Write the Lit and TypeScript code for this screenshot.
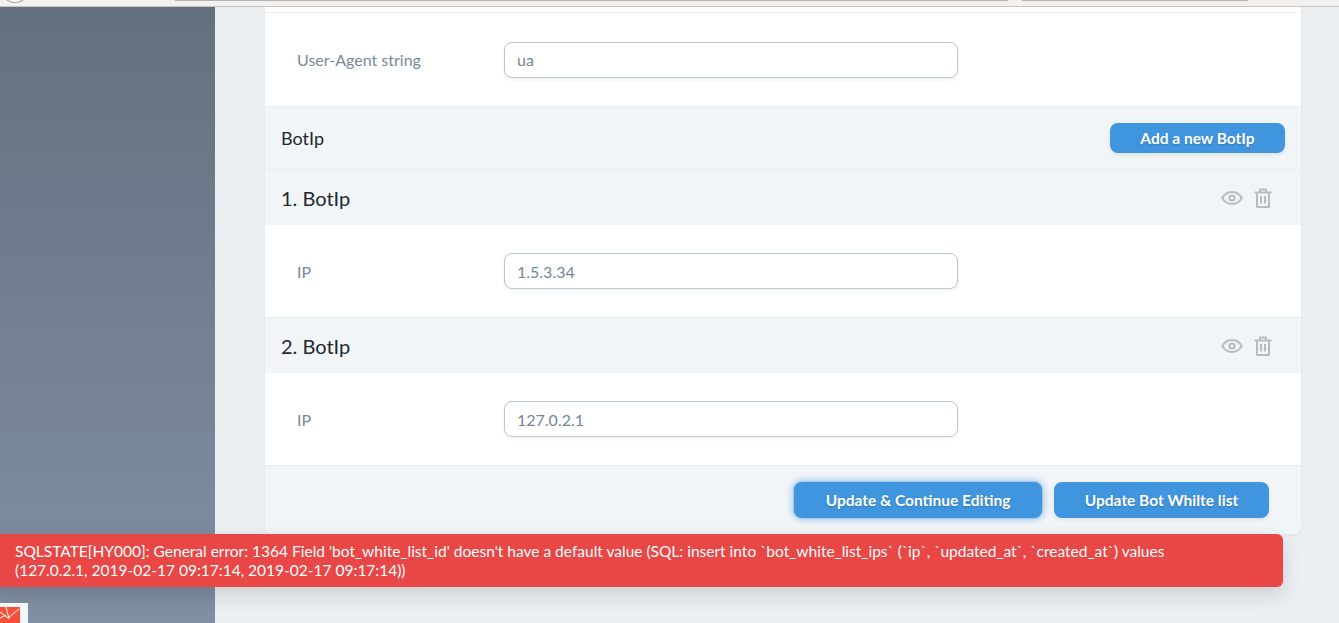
import { LitElement, html, css, svg } from "lit";
import { customElement } from "lit/decorators.js";

const eye = html`<svg class="ic" width="22" height="16" viewBox="0 0 22 16" fill="none" stroke="#b8bcc0" stroke-width="2"><path d="M1.2 8C3.6 4 7 2 11 2s7.4 2 9.8 6c-2.4 4-5.800 6-9.800 6S3.600 12 1.200 8z"/><circle cx="11" cy="8" r="2.600"/></svg>`;
const trash = html`<svg class="ic" width="18" height="20" viewBox="0 0 18 20" fill="none" stroke="#b8bcc0" stroke-width="2"><path d="M.5 4.500h17M3 4.500V18.500a.5.500 0 0 0 .5.500h11a.5.500 0 0 0 .5-.5V4.500M6 4.500V1.500h6v3M7 8v7.500M11 8v7.500"/></svg>`;

@customElement("app-root")
export class AppRoot extends LitElement {
  static styles = css`
    :host {
      display: block;
      width: 1339px;
      height: 623px;
      overflow: hidden;
      position: relative;
      background: #edf0f3;
      font-family: "Lato", "Noto Sans", sans-serif;
      color: #22292f;
    }
    * { box-sizing: border-box; }
    .chrome {
      position: absolute; left: 0; right: 0; top: 0; height: 7px;
      background: #f3f1ef; border-bottom: 1px solid #c9c4c0; overflow: hidden;
    }
    .chrome .tab { position: absolute; top: -6px; height: 7px; background: #f8f7f6; border-bottom: 1px solid #b5b3b0; }
    .chrome .t1 { left: 175px; width: 833px; }
    .chrome .t2 { left: 1022px; width: 226px; }
    .chrome .back { position: absolute; left: 4px; top: -12px; width: 22px; height: 15px; border: 1px solid #a5a3a0; border-radius: 50%; background: #fbfafa; }
    .layout { display: flex; height: 623px; padding-top: 7px; }
    .side { width: 215px; flex: none; background: linear-gradient(180deg, #64707f 0%, #808fa3 100%); position: relative; }
    .main { flex: 1; padding-left: 50px; padding-right: 38px; }
    .card {
      width: 1036px; background: #fff; border-radius: 0 0 8px 8px;
      box-shadow: 0 2px 4px rgba(0,0,0,.05); overflow: hidden;
    }
    .topedge { height: 6px; border-bottom: 1px solid #f0f2f4; }
    .row { display: flex; align-items: center; padding: 24px 32px; height: 92px; }
    .row.first { height: 93px; padding-top: 24px; }
    .label { width: 207px; font-size: 16px; color: #79889b; }
    .input {
      width: 454px; height: 36px; border: 1px solid #b8c5d5; border-radius: 8px;
      background: #fff; padding: 0 12px; display: flex; align-items: center;
      font-size: 16px; color: #77859a; box-shadow: 0 2px 4px rgba(0,0,0,.05);
    }
    .band { background: #f2f5f8; border-top: 1px solid #e9edf1; display: flex; align-items: center; }
    .head { height: 63px; padding: 0 16px; justify-content: space-between; font-size: 18px; }
    .item { height: 56px; padding: 0 16px; justify-content: space-between; font-size: 20px; color: #22292f; }
    .icons { display: flex; align-items: center; gap: 11px; padding-right: 13px; }
    .ic { display: block; }
    .btn {
      height: 36px; border-radius: 8px; background: #3f96de; color: #fff; font-weight: 700;
      font-size: 15.500px; display: flex; align-items: center; justify-content: center;
      text-shadow: 0 1px 2px rgba(0,0,0,.2); box-shadow: 0 2px 4px rgba(0,0,0,.08);
    }
    .add { width: 175px; height: 30px; }
    .foot { height: 69px; padding: 0 32px; justify-content: flex-end; gap: 12px; }
    .upd1 { width: 248px; box-shadow: 0 0 0 1px rgba(63,150,222,.25), 0 0 6px 2px rgba(63,150,222,.45); }
    .upd2 { width: 215px; }
    .toast {
      position: absolute; left: -8px; top: 534px; width: 1291px; height: 53px;
      background: #e94646; border-radius: 6px; color: #fff; font-size: 15.500px; line-height: 19px;
      padding: 8px 23px; box-shadow: 0 8px 20px rgba(0,0,0,.14);
    }
    .toast div { white-space: nowrap; }
    .logo { position: absolute; left: 0; top: 603px; width: 28px; height: 20px; background: #f4f5f7; overflow: hidden; }
  `;

  render() {
    return html`
      <div class="layout">
        <div class="side"></div>
        <div class="main">
          <div class="card">
            <div class="topedge"></div>
            <div class="row first">
              <div class="label">User-Agent string</div>
              <div class="input">ua</div>
            </div>
            <div class="band head"><span>BotIp</span><div class="btn add">Add a new BotIp</div></div>
            <div class="band item"><span>1. BotIp</span><div class="icons">${eye}${trash}</div></div>
            <div class="row"><div class="label">IP</div><div class="input">1.5.3.34</div></div>
            <div class="band item"><span>2. BotIp</span><div class="icons">${eye}${trash}</div></div>
            <div class="row"><div class="label">IP</div><div class="input">127.0.2.1</div></div>
            <div class="band foot">
              <div class="btn upd1">Update &amp; Continue Editing</div>
              <div class="btn upd2">Update Bot Whilte list</div>
            </div>
          </div>
        </div>
      </div>
      <div class="chrome"><div class="back"></div><div class="tab t1"></div><div class="tab t2"></div></div>
      <div class="toast">
        <div>SQLSTATE[HY000]: General error: 1364 Field 'bot_white_list_id' doesn't have a default value (SQL: insert into \`bot_white_list_ips\` (\`ip\`, \`updated_at\`, \`created_at\`) values</div>
        <div>(127.0.2.1, 2019-02-17 09:17:14, 2019-02-17 09:17:14))</div>
      </div>
      <div class="logo">
        <svg width="28" height="20" viewBox="0 0 28 20">
          <rect x="0" y="4" width="20" height="16" fill="#f4503a"/>
          <path d="M0 9l8 6 11-9M6 4l3 12M0 15l6-3" stroke="#fff" stroke-width="1" fill="none"/>
        </svg>
      </div>
    `;
  }
}
